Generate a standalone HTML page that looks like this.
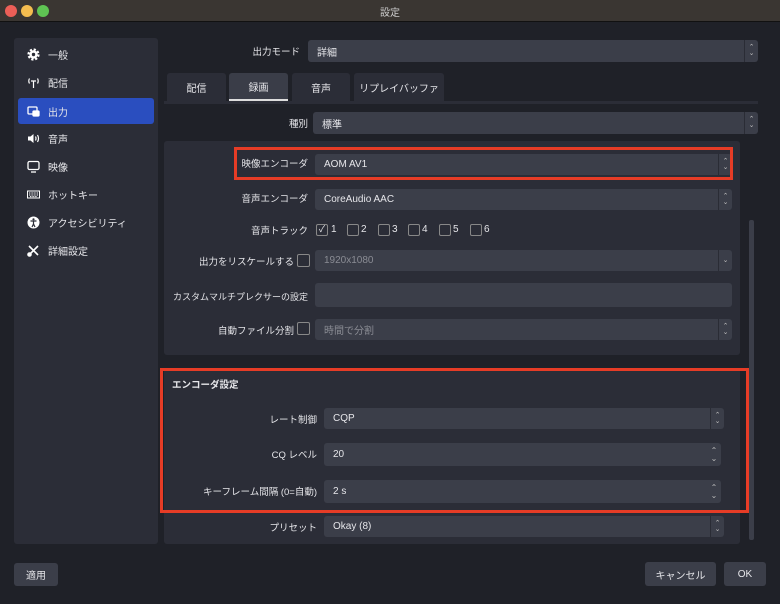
<!DOCTYPE html>
<html><head><meta charset="utf-8"><style>
*{box-sizing:border-box;margin:0;padding:0}
body{width:780px;height:604px;background:#1f2128;font-family:"Liberation Sans","Noto Sans CJK JP",sans-serif;color:#e6e6ea;font-size:10px;position:relative;overflow:hidden}
.abs{position:absolute}
.tb{left:0;top:0;width:780px;height:22px;background:#3a3632;border-bottom:1px solid #111}
.dot{top:5px;width:12px;height:12px;border-radius:50%}
.side{left:14px;top:38px;width:144px;height:506px;background:#2b2d37;border-radius:3px}
.item{left:18px;width:136px;height:26px;border-radius:3px;display:flex;align-items:center;padding-left:30px;font-size:10px}
.ic{position:absolute;left:9px;top:7px;width:13px;height:13px}
.combo{background:#3b3e49;border-radius:3px;height:22px;display:flex;align-items:center;padding-left:9px;font-size:10px}
.combo .ar{position:absolute;right:0;top:0;width:14px;height:100%;border-left:1px solid #2a2c35;color:#bbb;font-size:7px;line-height:6px;display:flex;flex-direction:column;align-items:center;justify-content:center}
.lbl{text-align:right;font-size:9.5px;white-space:nowrap;margin-top:3px;line-height:12px}
.panel{background:#2b2d37;border-radius:3px}
.tab{top:73px;height:28px;background:#2b2d37;border-radius:3px 3px 0 0;display:flex;align-items:center;justify-content:center;font-size:10px}
.cb{width:12px;height:12px;border:1px solid #888;border-radius:2px}
.red{border:3px solid #e63c26}
.btn{background:#3b3e49;border-radius:3px;display:flex;align-items:center;justify-content:center;font-size:10px}
.dim{color:#8a8c94}
</style></head><body>
<div class="abs tb"></div>
<div class="abs dot" style="left:5px;background:#ec5f57"></div>
<div class="abs dot" style="left:21px;background:#f4bd4f"></div>
<div class="abs dot" style="left:37px;background:#5fc453"></div>
<div class="abs" style="left:0;width:780px;top:4px;text-align:center;font-size:10px;color:#ccc">設定</div>

<div class="abs side"></div>
<div class="abs item" style="top:41px"><svg class="ic" viewBox="0 0 13 13"><circle cx="6.5" cy="6.5" r="5" fill="none" stroke="#fff" stroke-width="2.2" stroke-dasharray="2.2 1.73"/><circle cx="6.5" cy="6.5" r="4.2" fill="#fff"/><circle cx="6.5" cy="6.5" r="1.7" fill="#2b2d37"/></svg>一般</div>
<div class="abs item" style="top:69px"><svg class="ic" viewBox="0 0 13 13" fill="none" stroke="#fff" stroke-width="1.2"><path d="M6.5 5V12M4 5h5"/><path d="M2.5 2.5a5 5 0 000 5M10.5 2.5a5 5 0 010 5"/></svg>配信</div>
<div class="abs item" style="top:98px;background:#2a4ebf"><svg class="ic" viewBox="0 0 13 13" fill="none" stroke="#fff" stroke-width="1.3"><rect x="1" y="2" width="9" height="7" rx="1"/><rect x="6" y="6" width="6" height="5" rx="1" fill="#fff"/></svg>出力</div>
<div class="abs item" style="top:125px"><svg class="ic" viewBox="0 0 13 13"><path d="M1 4.5h2.5L6.5 2v9L3.5 8.5H1z" fill="#fff"/><path d="M8.5 4.5q1 2 0 4M10.5 3q2 3.5 0 7" stroke="#fff" fill="none" stroke-width="1.2"/></svg>音声</div>
<div class="abs item" style="top:153px"><svg class="ic" viewBox="0 0 13 13" fill="none" stroke="#fff" stroke-width="1.3"><rect x="1" y="1.5" width="11" height="8" rx="1.5"/><path d="M4 12h5"/></svg>映像</div>
<div class="abs item" style="top:181px"><svg class="ic" viewBox="0 0 13 13"><rect x="0.5" y="3" width="12" height="7" fill="none" stroke="#fff"/><path d="M2 5h9M2 7h9M3 8.6h7" stroke="#fff" stroke-dasharray="1 .6"/></svg>ホットキー</div>
<div class="abs item" style="top:209px"><svg class="ic" viewBox="0 0 13 13"><circle cx="6.5" cy="6.5" r="6" fill="#fff"/><circle cx="6.5" cy="3.3" r="1.1" fill="#2b2d37"/><path d="M3.5 5h6M6.5 5v3L5 11M6.5 8L8 11" stroke="#2b2d37" stroke-width="1.2" fill="none"/></svg>アクセシビリティ</div>
<div class="abs item" style="top:237px"><svg class="ic" viewBox="0 0 13 13" stroke="#fff" stroke-width="1.6" fill="none"><path d="M2 2l9 9M11 2L2 11"/><circle cx="2.5" cy="10.5" r="1.5" fill="#fff"/></svg>詳細設定</div>

<div class="abs lbl" style="left:200px;width:100px;top:44px">出力モード</div>
<div class="abs combo" style="left:308px;top:40px;width:450px">詳細<div class="ar">⌃<br>⌄</div></div>
<div class="abs tab" style="left:167px;width:59px">配信</div>
<div class="abs tab" style="left:229px;width:59px;background:#3a3d48;border-bottom:2px solid #ddd">録画</div>
<div class="abs tab" style="left:292px;width:58px">音声</div>
<div class="abs tab" style="left:354px;width:90px">リプレイバッファ</div>
<div class="abs" style="left:164px;top:101px;width:594px;height:3px;background:#2b2d37"></div>
<div class="abs lbl" style="left:210px;width:98px;top:116px">種別</div>
<div class="abs combo" style="left:313px;top:112px;width:445px">標準<div class="ar">⌃<br>⌄</div></div>

<div class="abs panel" style="left:164px;top:141px;width:576px;height:214px"></div>
<div class="abs" style="left:749px;top:220px;width:5px;height:320px;background:#3b3e49;border-radius:2px"></div>
<div class="abs lbl" style="left:200px;width:108px;top:156px">映像エンコーダ</div>
<div class="abs combo" style="left:315px;top:154px;width:417px;height:21px">AOM AV1<div class="ar">⌃<br>⌄</div></div>
<div class="abs red" style="left:234px;top:147px;width:499px;height:33px"></div>
<div class="abs lbl" style="left:200px;width:108px;top:191px">音声エンコーダ</div>
<div class="abs combo" style="left:315px;top:189px;width:417px;height:21px">CoreAudio AAC<div class="ar">⌃<br>⌄</div></div>
<div class="abs lbl" style="left:200px;width:108px;top:223px">音声トラック</div>
<div class="abs cb" style="left:316px;top:224px;font-size:9px;line-height:9px;text-align:center">✓</div><div class="abs" style="left:331px;top:224px">1</div>
<div class="abs cb" style="left:347px;top:224px"></div><div class="abs" style="left:361px;top:224px">2</div>
<div class="abs cb" style="left:378px;top:224px"></div><div class="abs" style="left:392px;top:224px">3</div>
<div class="abs cb" style="left:408px;top:224px"></div><div class="abs" style="left:422px;top:224px">4</div>
<div class="abs cb" style="left:439px;top:224px"></div><div class="abs" style="left:453px;top:224px">5</div>
<div class="abs cb" style="left:470px;top:224px"></div><div class="abs" style="left:484px;top:224px">6</div>
<div class="abs lbl" style="left:170px;width:124px;top:254px">出力をリスケールする</div>
<div class="abs cb" style="left:297px;top:254px;width:13px;height:13px"></div>
<div class="abs combo dim" style="left:315px;top:250px;width:417px;height:21px">1920x1080<div class="ar">⌄</div></div>
<div class="abs lbl" style="left:160px;width:148px;top:288px;font-size:9px">カスタムマルチプレクサーの設定</div>
<div class="abs combo" style="left:315px;top:283px;width:417px;height:24px"></div>
<div class="abs lbl" style="left:170px;width:124px;top:323px">自動ファイル分割</div>
<div class="abs cb" style="left:297px;top:322px;width:13px;height:13px"></div>
<div class="abs combo dim" style="left:315px;top:319px;width:417px;height:21px">時間で分割<div class="ar">⌃<br>⌄</div></div>

<div class="abs panel" style="left:164px;top:368px;width:576px;height:176px"></div>
<div class="abs red" style="left:160px;top:368px;width:589px;height:145px"></div>
<div class="abs" style="left:172px;top:377px;font-size:9.5px;font-weight:bold">エンコーダ設定</div>
<div class="abs lbl" style="left:200px;width:117px;top:412px">レート制御</div>
<div class="abs combo" style="left:324px;top:408px;width:400px;height:21px">CQP<div class="ar">⌃<br>⌄</div></div>
<div class="abs lbl" style="left:200px;width:117px;top:447px">CQ レベル</div>
<div class="abs combo" style="left:324px;top:443px;width:397px;height:23px">20<div class="ar" style="border:none;font-size:8px;line-height:8px">⌃<br>⌄</div></div>
<div class="abs lbl" style="left:180px;width:137px;top:484px">キーフレーム間隔 (0=自動)</div>
<div class="abs combo" style="left:324px;top:480px;width:397px;height:23px">2 s<div class="ar" style="border:none;font-size:8px;line-height:8px">⌃<br>⌄</div></div>
<div class="abs lbl" style="left:200px;width:117px;top:520px">プリセット</div>
<div class="abs combo" style="left:324px;top:516px;width:400px;height:21px">Okay (8)<div class="ar">⌃<br>⌄</div></div>

<div class="abs btn" style="left:14px;top:563px;width:44px;height:23px">適用</div>
<div class="abs btn" style="left:645px;top:562px;width:71px;height:24px">キャンセル</div>
<div class="abs btn" style="left:724px;top:562px;width:42px;height:24px">OK</div>
</body></html>
